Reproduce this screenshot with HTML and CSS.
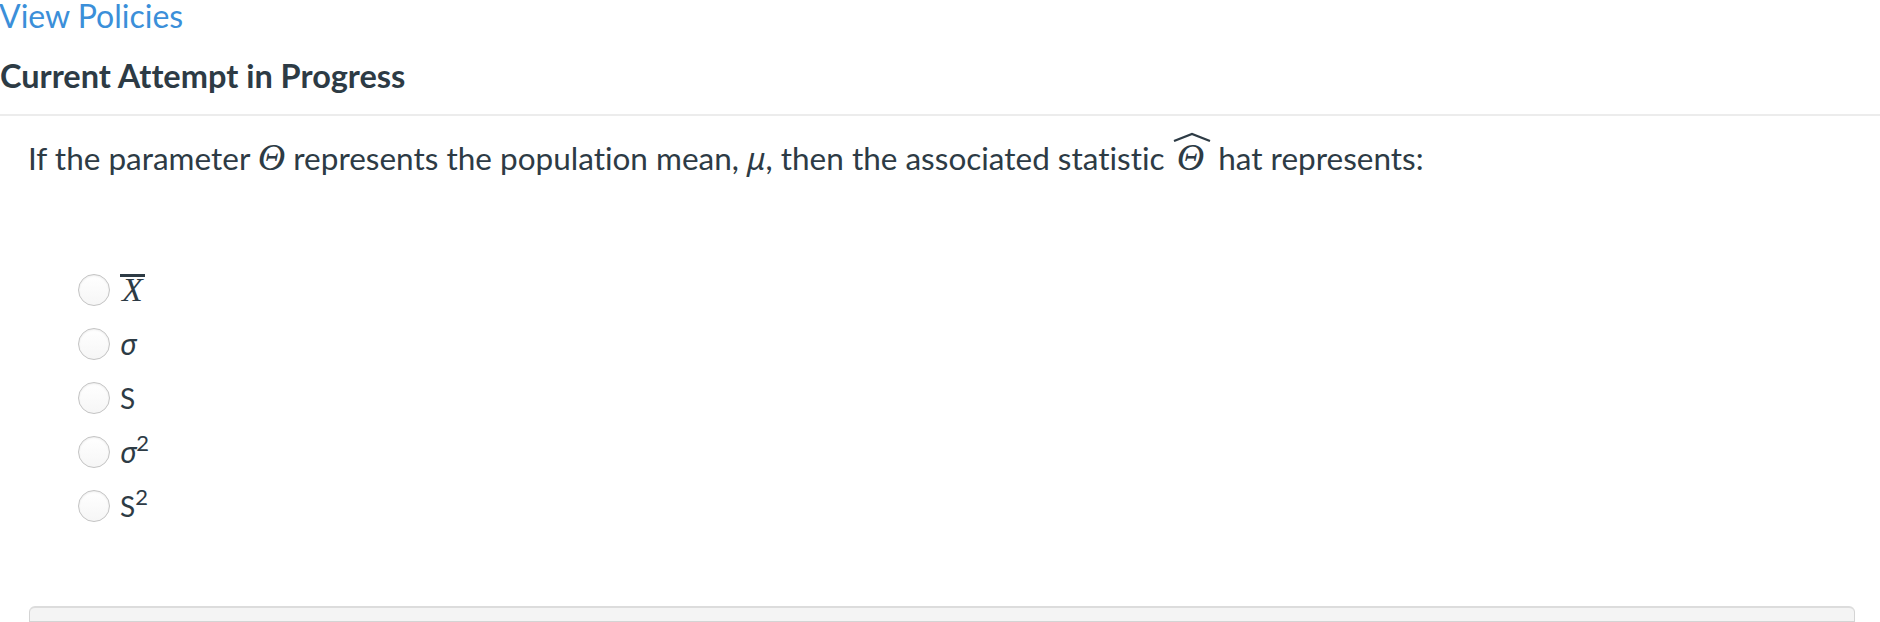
FILE: index.html
```html
<!DOCTYPE html>
<html>
<head>
<meta charset="utf-8">
<link rel="stylesheet" href="styles.css">
</head>
<body>
<div class="page">
  <a class="policies" href="#">View Policies</a>
  <h2 class="attempt">Current Attempt in Progress</h2>
  <div class="rule"></div>
  <p class="question">If the parameter <span class="math theta">Θ</span> represents the population mean, <span class="greek">μ</span>, then the associated statistic <span class="hatted"><span class="math theta">Θ</span><svg class="hat" viewBox="0 0 38 10" width="38" height="10"><path d="M1 9 L19 2 L37 9" fill="none" stroke="#2d3b45" stroke-width="2.2" stroke-linejoin="miter"/></svg></span> hat represents:</p>
  <div class="options">
    <label class="option"><span class="radio"></span><span class="ans"><span class="math xbar">X</span></span></label>
    <label class="option"><span class="radio"></span><span class="ans"><span class="greek">σ</span></span></label>
    <label class="option"><span class="radio"></span><span class="ans">S</span></label>
    <label class="option"><span class="radio"></span><span class="ans"><span class="greek">σ</span><sup class="sq">2</sup></span></label>
    <label class="option"><span class="radio"></span><span class="ans">S<sup class="sq">2</sup></span></label>
  </div>
  <div class="panel"></div>
</div>
</body>
</html>
```

FILE: styles.css
```css
html, body {
  margin: 0;
  padding: 0;
  background: #ffffff;
}
body {
  font-family: Lato, "Liberation Sans", sans-serif;
  color: #2d3b45;
  overflow: hidden;
  font-variant-ligatures: none;
}
.page {
  display: flex;
  flex-direction: column;
  height: 622px;
}
.policies {
  display: block;
  font-size: 32px;
  line-height: 32px;
  color: #3b8fd9;
  text-decoration: none;
  margin-left: -1px;
}
.attempt {
  margin: 24px 0 0 0;
  font-size: 32.5px;
  line-height: 40px;
  font-weight: 700;
  color: #2d3b45;
}
.rule {
  margin-top: 18px;
  height: 2px;
  background: #ececec;
}
.question {
  margin: 22px 0 0 28px;
  font-size: 31.5px;
  line-height: 40px;
  color: #2d3b45;
}
.math {
  font-family: "Liberation Serif", "DejaVu Serif", serif;
  font-style: italic;
}
.theta {
  font-size: 38px;
  line-height: 0;
}
.greek {
  font-family: "Noto Sans", "DejaVu Sans", sans-serif;
  font-style: italic;
}
.hatted {
  position: relative;
  display: inline-block;
  padding: 0 6px 0 4px;
  line-height: 40px;
}
.hat {
  position: absolute;
  left: 0px;
  top: -6px;
}
.options {
  display: flex;
  flex-direction: column;
  margin: 85px 0 0 78px;
}
.option {
  display: flex;
  align-items: center;
  height: 54px;
  gap: 10px;
}
.radio {
  width: 30px;
  height: 30px;
  border-radius: 50%;
  border: 1px solid #c4c4c4;
  background: linear-gradient(#ffffff, #f6f6f6);
  box-shadow: inset 0 1px 2px rgba(0,0,0,0.08);
  flex: none;
}
.ans {
  font-size: 28px;
  line-height: 34px;
  color: #2d3b45;
}
.ans .greek {
  font-size: 29px;
}
.xbar {
  display: inline-block;
  font-size: 34px;
  border-top: 3px solid #2d3b45;
  line-height: 26px;
  padding: 0 2px;
  margin-top: -6px;
}
.sq {
  font-family: Lato, sans-serif;
  font-style: normal;
  font-size: 22px;
  line-height: 0;
  vertical-align: 12px;
}
.panel {
  margin: 73px 25px 0 29px;
  flex: 1;
  background: #f4f4f4;
  border: 1px solid #d4d4d4;
  border-top: 2px solid #dcdcdc;
  border-radius: 6px 6px 0 0;
}
```
